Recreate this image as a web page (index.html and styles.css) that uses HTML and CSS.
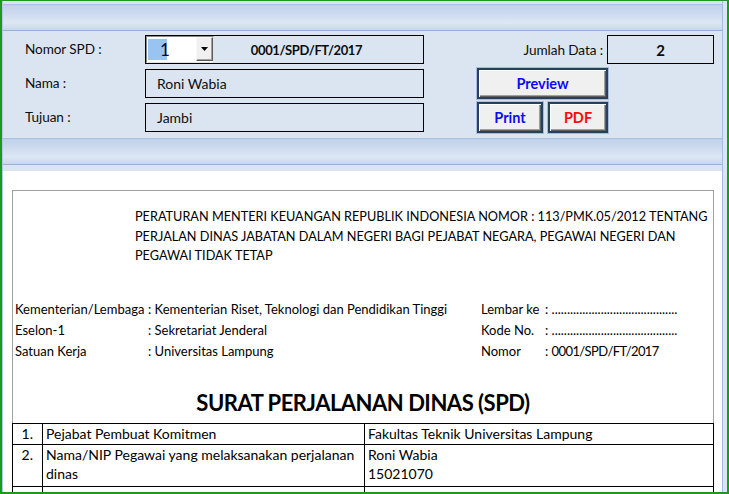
FILE: index.html
```html
<!DOCTYPE html>
<html>
<head>
<meta charset="utf-8">
<link rel="stylesheet" href="styles.css">
</head>
<body>
<div class="window">
  <div class="main">
    <div class="band band-top"></div>
    <div class="form">
      <div class="lbl row1">Nomor SPD :</div>
      <div class="box box-spd row1">
        <div class="combo">
          <span class="combo-val"><span class="sel">1</span></span>
          <span class="combo-btn"><svg width="7" height="4" viewBox="0 0 7 4"><polygon points="0,0 7,0 3.5,4" fill="#000"/></svg></span>
        </div>
        <span class="spd-no">0001/SPD/FT/2017</span>
      </div>
      <div class="lbl-right row1">Jumlah Data :</div>
      <div class="box box-count row1">2</div>

      <div class="lbl row2">Nama :</div>
      <div class="box box-text row2">Roni Wabia</div>
      <div class="btn-wrap row2"><button class="btn btn-blue btn-wide">Preview</button></div>

      <div class="lbl row3">Tujuan :</div>
      <div class="box box-text row3">Jambi</div>
      <div class="btn-wrap btn-pair row3">
        <button class="btn btn-blue btn-print">Print</button>
        <button class="btn btn-red btn-pdf">PDF</button>
      </div>
    </div>
    <div class="band band-bottom"></div>
    <div class="strip"></div>
    <div class="docarea">
      <div class="page">
        <p class="reg">PERATURAN MENTERI KEUANGAN REPUBLIK INDONESIA NOMOR : 113/PMK.05/2012 TENTANG<br>PERJALAN DINAS JABATAN DALAM NEGERI BAGI PEJABAT NEGARA, PEGAWAI NEGERI DAN<br>PEGAWAI TIDAK TETAP</p>
        <div class="meta">
          <div class="meta-left">
            <span class="mk">Kementerian/Lembaga</span><span class="mv">: Kementerian Riset, Teknologi dan Pendidikan Tinggi</span>
            <span class="mk">Eselon-1</span><span class="mv">: Sekretariat Jenderal</span>
            <span class="mk">Satuan Kerja</span><span class="mv">: Universitas Lampung</span>
          </div>
          <div class="meta-right">
            <span class="rk">Lembar ke</span><span class="rv">: .........................................</span>
            <span class="rk">Kode No.</span><span class="rv">: .........................................</span>
            <span class="rk">Nomor</span><span class="rv">: <span class="num">0001/SPD/FT/2017</span></span>
          </div>
        </div>
        <h1 class="title">SURAT PERJALANAN DINAS (SPD)</h1>
        <table class="spd">
          <tr class="tr1"><td class="no">1.</td><td class="c2">Pejabat Pembuat Komitmen</td><td class="c3">Fakultas Teknik Universitas Lampung</td></tr>
          <tr class="tr2"><td class="no">2.</td><td class="c2">Nama/NIP Pegawai yang melaksanakan perjalanan<br>dinas</td><td class="c3">Roni Wabia<br>15021070</td></tr>
          <tr class="tr3"><td class="no"></td><td class="c2"></td><td class="c3"></td></tr>
        </table>
      </div>
    </div>
  </div>
  <div class="vstrip"></div>
</div>
</body>
</html>
```
FILE: styles.css
```css
* { box-sizing: border-box; }
html, body { margin: 0; padding: 0; }
body { width: 729px; height: 494px; overflow: hidden; background: #dbe5f1; font-family: Lato, "Noto Sans", sans-serif; }

.window {
  width: 729px; height: 494px;
  display: flex;
  border-top: 1px solid #1d9a1d;
  border-left: 2px solid #1d9a1d;
  border-right: 2px solid #1d9a1d;
  border-bottom: 2px solid #1d9a1d;
  background: #dbe5f1;
}
.main {
  flex: 1;
  display: flex; flex-direction: column;
  border-left: 1px solid #b4c8e3;
  padding-top: 3px;
  background: #dbe5f1;
  min-width: 0;
}
.vstrip { width: 5px; border-left: 1px solid #a3bde0; background: #dbe5f1; }

.band {
  height: 27px; flex: none;
  border-top: 1px solid #a9c1e2;
  border-bottom: 1px solid #95b3d7;
  background: linear-gradient(#bfd1ea, #d2def0 45%, #dde7f4 72%, #c7d7ed);
}

.form {
  height: 107px; flex: none;
  display: grid;
  grid-template-columns: 120px 279px 53px 130px 107px;
  grid-template-rows: 29px 29px 29px;
  row-gap: 5px;
  padding: 4px 0 0 22px;
  font-size: 14px; color: #0d0d0d;
}
.row1 { grid-row: 1; } .row2 { grid-row: 2; } .row3 { grid-row: 3; }
.lbl { grid-column: 1; display: flex; align-items: center; padding-bottom: 1px; font-size: 13.6px; letter-spacing: -0.1px; }
.box { grid-column: 2; border: 1px solid #000; display: flex; align-items: center; }
.box-text { padding-left: 11px; }
.box-spd { padding: 0; }
.combo {
  width: 68px; height: 27px; flex: none;
  background: #fff;
  border: 1px solid; border-color: #8a8a8a #e4e4e4 #e4e4e4 #8a8a8a;
  display: flex; align-items: stretch;
}
.combo-val { flex: 1; display: flex; align-items: center; padding-left: 1px; }
.sel { background: #99c4f2; color: #0a0a3a; font-size: 17px; line-height: 21px; padding-left: 12px; width: 19px; }
.combo-btn {
  width: 17px; margin: 0 0 1px 0;
  background: #f0f0f0;
  border: 1px solid; border-color: #f8f8f8 #5a5a5a #5a5a5a #f8f8f8;
  box-shadow: inset -1px -1px 0 #a0a0a0;
  display: flex; align-items: center; justify-content: center;
}
.combo-btn svg { display: block; margin-bottom: 1px; }
.spd-no { flex: 1; text-align: center; font-weight: bold; font-size: 13px; letter-spacing: -0.4px; padding-right: 24px; }

.lbl-right { grid-column: 4; display: flex; align-items: center; justify-content: flex-end; padding-right: 4px; font-size: 13.6px; letter-spacing: -0.1px; }
.box-count { grid-column: 5; justify-content: center; font-weight: bold; font-size: 15px; }

.btn-wrap { grid-column: 4; margin: -1px -1px -1px 0; display: flex; }
.btn-pair { gap: 5px; }
.btn {
  height: 31px; margin: 0; padding: 0;
  border: 2px solid #26405f;
  outline: 1px solid #a3bde0;
  outline-offset: 0;
  background: #f0f0f0;
  box-shadow: inset 1px 1px 0 #fff, inset -1px -1px 0 #5e5e5e, inset -2px -2px 0 #a0a0a0;
  font-family: Lato, "Noto Sans", sans-serif;
  font-weight: bold; font-size: 14.5px;
}
.btn-wide { width: 100%; }
.btn-print { width: 66px; }
.btn-pdf { flex: 1; }
.btn-blue { color: #0b0bf5; }
.btn-red { color: #f50b0b; }

.strip { height: 6px; flex: none; }
.docarea {
  flex: 1; background: #fff;
  padding: 19px 8px 0 9px;
  overflow: hidden;
  min-height: 0;
}
.page {
  border: 1px solid #a0a0a0; border-bottom: none;
  height: 100%;
  font-size: 13px; color: #000;
}
.reg { margin: 16px 0 0 0; padding-left: 122px; line-height: 19.5px; white-space: nowrap; font-size: 12.7px; }
.meta { margin-top: 33px; display: flex; line-height: 21px; white-space: nowrap; }
.meta-left { width: 468px; display: grid; grid-template-columns: 133px auto; padding-left: 2px; }
.meta-right { display: grid; grid-template-columns: 64px auto; }
.num { letter-spacing: -0.6px; }
.title { margin: 26px 0 0 0; text-align: center; font-size: 22px; letter-spacing: -0.5px; font-weight: bold; line-height: 30px; height: 35px; }
.spd { border-collapse: collapse; margin-left: -1px; width: calc(100% + 2px); font-size: 14px; }
.spd td { border: 1px solid #000; padding: 0; line-height: 19.5px; vertical-align: top; }
.spd .no { width: 30px; text-align: right; padding-right: 9px; }
.spd .c2 { width: 322px; padding-left: 3px; }
.spd .c3 { padding-left: 3px; }
.tr1 td { height: 21px; }
.tr2 td { height: 42px; }
.tr3 td { height: 20px; }
```
